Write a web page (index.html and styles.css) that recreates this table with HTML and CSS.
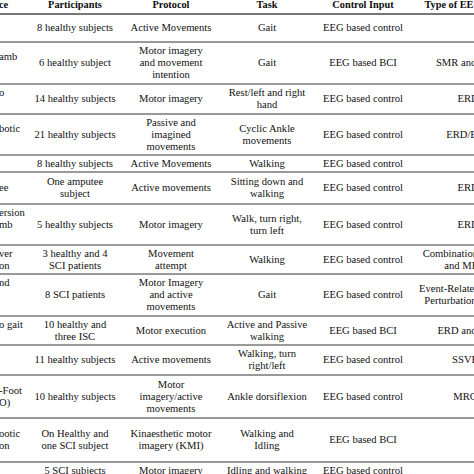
FILE: index.html
```html
<!DOCTYPE html>
<html>
<head>
<meta charset="utf-8">
<link rel="stylesheet" href="styles.css">
</head>
<body>
<div class="clip">
<table class="tbl">
<colgroup>
<col class="c0"><col class="c1"><col class="c2"><col class="c3"><col class="c4"><col class="c5">
</colgroup>
<thead>
<tr class="head"><th class="dev">ce</th><th>Participants</th><th>Protocol</th><th>Task</th><th>Control Input</th><th>Type of EEG Signal</th></tr>
</thead>
<tbody>
<tr class="r28"><td class="dev"></td><td>8 healthy subjects</td><td>Active Movements</td><td>Gait</td><td>EEG based control</td><td></td></tr>
<tr class="r42"><td class="dev">amb<br>&nbsp;</td><td>6 healthy subject</td><td>Motor imagery<br>and movement<br>intention</td><td>Gait</td><td>EEG based BCI</td><td>SMR and ERD</td></tr>
<tr class="r30"><td class="dev">o<br>&nbsp;</td><td>14 healthy subjects</td><td>Motor imagery</td><td>Rest/left and right<br>hand</td><td>EEG based control</td><td>ERD</td></tr>
<tr class="r41"><td class="dev">botic<br>&nbsp;</td><td>21 healthy subjects</td><td>Passive and<br>imagined<br>movements</td><td>Cyclic Ankle<br>movements</td><td>EEG based control</td><td>ERD/ERS</td></tr>
<tr class="r17"><td class="dev"></td><td>8 healthy subjects</td><td>Active Movements</td><td>Walking</td><td>EEG based control</td><td></td></tr>
<tr class="r32"><td class="dev">ee</td><td>One amputee<br>subject</td><td>Active movements</td><td>Sitting down and<br>walking</td><td>EEG based control</td><td>ERD</td></tr>
<tr class="r41"><td class="dev">ersion<br>mb<br>&nbsp;</td><td>5 healthy subjects</td><td>Motor imagery</td><td>Walk, turn right,<br>turn left</td><td>EEG based control</td><td>ERD</td></tr>
<tr class="r29"><td class="dev">ver<br>on</td><td>3 healthy and 4<br>SCI patients</td><td>Movement<br>attempt</td><td>Walking</td><td>EEG based control</td><td>Combination of ERD<br>and MRCP</td></tr>
<tr class="r42"><td class="dev">nd<br>&nbsp;<br>&nbsp;</td><td>8 SCI patients</td><td>Motor Imagery<br>and active<br>movements</td><td>Gait</td><td>EEG based control</td><td>Event-Related Spectral<br>Perturbation (ERSP)</td></tr>
<tr class="r29"><td class="dev">o gait<br>&nbsp;</td><td>10 healthy and<br>three ISC</td><td>Motor execution</td><td>Active and Passive<br>walking</td><td>EEG based BCI</td><td>ERD and ERS</td></tr>
<tr class="r30"><td class="dev"></td><td>11 healthy subjects</td><td>Active movements</td><td>Walking, turn<br>right/left</td><td>EEG based control</td><td>SSVEP</td></tr>
<tr class="r43"><td class="dev">-Foot<br>O)</td><td>10 healthy subjects</td><td>Motor<br>imagery/active<br>movements</td><td>Ankle dorsiflexion</td><td>EEG based control</td><td>MRCP</td></tr>
<tr class="r44"><td class="dev">ootic<br>on</td><td>On Healthy and<br>one SCI subject</td><td>Kinaesthetic motor<br>imagery (KMI)</td><td>Walking and<br>Idling</td><td>EEG based BCI</td><td></td></tr>
<tr class="r17"><td class="dev"></td><td>5 SCI subjects</td><td>Motor imagery</td><td>Idling and walking</td><td>EEG based control</td><td></td></tr>
</tbody>
</table>
</div>
</body>
</html>
```
FILE: styles.css
```css
html, body {
  margin: 0;
  padding: 0;
  background: #fff;
}
.clip {
  width: 474px;
  height: 474px;
  overflow: hidden;
}
.tbl {
  table-layout: fixed;
  width: 526px;
  border-collapse: collapse;
  margin-top: -4px;
  margin-left: -1px;
  font-family: "Liberation Serif", "Times New Roman", serif;
  font-size: 10.6px;
  line-height: 12px;
  color: #111;
}
.c0 { width: 28px; }
.c1 { width: 96px; }
.c2 { width: 96px; }
.c3 { width: 96px; }
.c4 { width: 96px; }
.c5 { width: 114px; }
.tbl th, .tbl td {
  padding: 0 1px;
  text-align: center;
  vertical-align: middle;
  white-space: nowrap;
  overflow: visible;
}
.tbl .dev {
  text-align: left;
  padding: 0;
}
.tbl th {
  font-weight: bold;
  font-size: 10.3px;
  color: #0c0c0c;
}
.head {
  height: 18px;
  border-bottom: 2px solid #777;
}
.tbl tbody tr {
  border-bottom: 2px solid #9a9a9a;
}
.r17 { height: 17px; }
.r28 { height: 28px; }
.r29 { height: 29px; }
.r30 { height: 30px; }
.r32 { height: 32px; }
.r41 { height: 41px; }
.r42 { height: 42px; }
.r43 { height: 43px; }
.r44 { height: 44px; }
```
